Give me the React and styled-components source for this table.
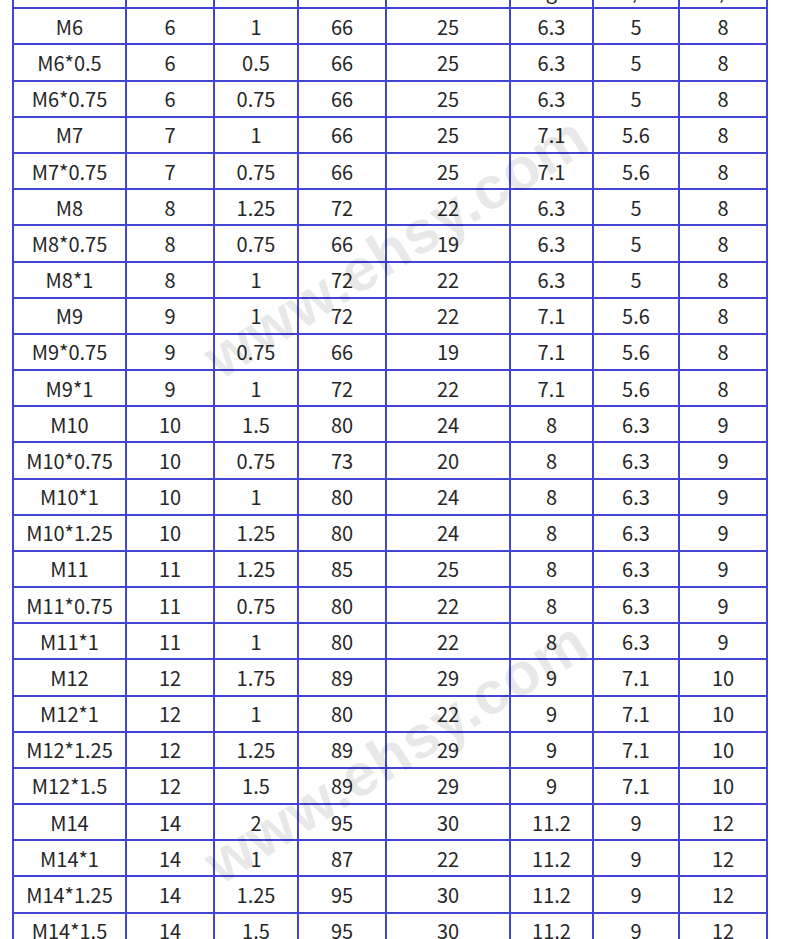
import React from "react";
import styled, { createGlobalStyle, css } from "styled-components";

const GlobalStyle = createGlobalStyle`
  html, body {
    margin: 0;
    padding: 0;
    background: #ffffff;
    overflow: hidden;
  }
  body {
    font-family: "Noto Sans CJK SC", "Noto Sans", sans-serif;
  }
`;

const Page = styled.div`
  position: relative;
  width: 790px;
  height: 939px;
  overflow: hidden;
  background: #ffffff;
  padding-left: 12px;
  box-sizing: border-box;
`;

const Grid = styled.div`
  display: grid;
  grid-template-columns: 111px 86px 82px 86px 122px 81px 84px 86px;
  grid-template-rows: 7.3px;
  grid-auto-rows: 34.18px;
  gap: 2px;
  width: max-content;
  background: #4343d6;
  border-left: 2px solid #4343d6;
  border-right: 2px solid #4343d6;
`;

const Cell = styled.div`
  background: #ffffff;
  overflow: hidden;
  font-family: "Noto Sans CJK SC", "Noto Sans", sans-serif;
  font-size: 20px;
  color: #262626;
  white-space: nowrap;
  ${(p) =>
    p.$head
      ? css`
          display: block;
          text-align: center;
        `
      : css`
          display: flex;
          align-items: center;
          justify-content: center;
        `}
`;

const HeadText = styled.span`
  display: block;
  line-height: 20px;
  height: 20px;
  margin-top: -19px;
  font-size: 20px;
  color: #262626;
`;

const Watermark = styled.div`
  position: absolute;
  left: ${(p) => p.$x}px;
  top: ${(p) => p.$y}px;
  transform: translate(-50%, -50%) rotate(-32deg);
  font-family: "Liberation Sans", Arial, sans-serif;
  font-weight: 700;
  font-size: 60px;
  letter-spacing: 1px;
  color: rgba(0, 0, 0, 0.09);
  white-space: nowrap;
  pointer-events: none;
  user-select: none;
`;

const header = ["", "", "", "", "", "g", ")", ")"];

const rows = [
  ["M6", "6", "1", "66", "25", "6.3", "5", "8"],
  ["M6*0.5", "6", "0.5", "66", "25", "6.3", "5", "8"],
  ["M6*0.75", "6", "0.75", "66", "25", "6.3", "5", "8"],
  ["M7", "7", "1", "66", "25", "7.1", "5.6", "8"],
  ["M7*0.75", "7", "0.75", "66", "25", "7.1", "5.6", "8"],
  ["M8", "8", "1.25", "72", "22", "6.3", "5", "8"],
  ["M8*0.75", "8", "0.75", "66", "19", "6.3", "5", "8"],
  ["M8*1", "8", "1", "72", "22", "6.3", "5", "8"],
  ["M9", "9", "1", "72", "22", "7.1", "5.6", "8"],
  ["M9*0.75", "9", "0.75", "66", "19", "7.1", "5.6", "8"],
  ["M9*1", "9", "1", "72", "22", "7.1", "5.6", "8"],
  ["M10", "10", "1.5", "80", "24", "8", "6.3", "9"],
  ["M10*0.75", "10", "0.75", "73", "20", "8", "6.3", "9"],
  ["M10*1", "10", "1", "80", "24", "8", "6.3", "9"],
  ["M10*1.25", "10", "1.25", "80", "24", "8", "6.3", "9"],
  ["M11", "11", "1.25", "85", "25", "8", "6.3", "9"],
  ["M11*0.75", "11", "0.75", "80", "22", "8", "6.3", "9"],
  ["M11*1", "11", "1", "80", "22", "8", "6.3", "9"],
  ["M12", "12", "1.75", "89", "29", "9", "7.1", "10"],
  ["M12*1", "12", "1", "80", "22", "9", "7.1", "10"],
  ["M12*1.25", "12", "1.25", "89", "29", "9", "7.1", "10"],
  ["M12*1.5", "12", "1.5", "89", "29", "9", "7.1", "10"],
  ["M14", "14", "2", "95", "30", "11.2", "9", "12"],
  ["M14*1", "14", "1", "87", "22", "11.2", "9", "12"],
  ["M14*1.25", "14", "1.25", "95", "30", "11.2", "9", "12"],
  ["M14*1.5", "14", "1.5", "95", "30", "11.2", "9", "12"],
];

export default function App() {
  return (
    <>
      <GlobalStyle />
      <Page>
        <Grid>
          {header.map((h, i) => (
            <Cell key={`h${i}`} $head>
              <HeadText>{h}</HeadText>
            </Cell>
          ))}
          {rows.map((r, ri) =>
            r.map((v, ci) => <Cell key={`${ri}-${ci}`}>{v}</Cell>)
          )}
        </Grid>
        <Watermark $x={396} $y={247}>www.ehsy.com</Watermark>
        <Watermark $x={396} $y={752}>www.ehsy.com</Watermark>
      </Page>
    </>
  );
}
